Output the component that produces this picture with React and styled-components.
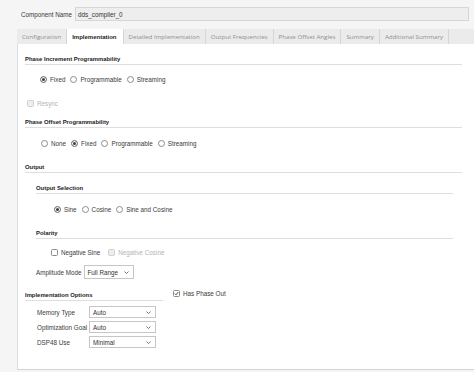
import styled, { createGlobalStyle } from 'styled-components';

const GlobalStyle = createGlobalStyle`
  body {
    margin: 0;
    background: #f5f5f5;
    font-family: "Liberation Sans", Arial, sans-serif;
    color: #3a3a3a;
  }
`;

const Page = styled.div`
  width: 474px;
  height: 372px;
  overflow: hidden;
  background: #f5f5f5;
  display: flex;
  flex-direction: column;
  font-size: 6.3px;
`;

const NameRow = styled.div`
  display: flex;
  align-items: center;
  gap: 3px;
  height: 14px;
  padding: 7px 5px 0 21px;
`;

const NameInput = styled.div`
  flex: 1;
  height: 14px;
  box-sizing: border-box;
  border: 1px solid #d6d6d6;
  background: #eeeeee;
  display: flex;
  align-items: center;
  padding-left: 2px;
  color: #333;
`;

const TabArea = styled.div`
  margin: 8px 0 0 17px;
  display: flex;
  flex-direction: column;
`;

const TabBar = styled.div`
  height: 15px;
  background: #ebebeb;
  display: flex;
`;

const Tab = styled.div`
  display: flex;
  align-items: center;
  padding: 0 ${p => (p.$active ? '6px' : '5px')} 0 5px;
  border-right: 1px solid #d6d6d6;
  background: ${p => (p.$active ? '#ffffff' : 'transparent')};
  font-family: ${p => (p.$active ? '"Liberation Sans", Arial' : '"Open Sans"')}, sans-serif;
  font-weight: ${p => (p.$active ? 'bold' : 'normal')};
  font-size: ${p => (p.$active ? '6px' : '6.15px')};
  color: ${p => (p.$active ? '#1e1e1e' : '#8e8e8e')};
`;

const Panel = styled.div`
  height: 326px;
  box-sizing: border-box;
  background: #ffffff;
  border-left: 1px solid #dddddd;
  border-bottom: 1px solid #d4d4d4;
  padding: 0 12px 0 7px;
  display: flex;
  flex-direction: column;
`;

const Heading = styled.div`
  margin-top: ${p => p.$mt}px;
  font-weight: bold;
  font-size: 5.9px;
  line-height: 8px;
  padding-bottom: 1px;
  border-bottom: 1px solid #dedede;
  color: #222;
`;

const SubSection = styled.div`
  margin: 0 9px 0 11px;
  display: flex;
  flex-direction: column;
`;

const Row = styled.div`
  display: flex;
  align-items: center;
  gap: ${p => p.$gap ?? 5}px;
  height: ${p => p.$h ?? 8}px;
  margin-top: ${p => p.$mt}px;
  padding-left: ${p => p.$indent ?? 0}px;
`;

const Option = styled.label`
  display: flex;
  align-items: center;
  gap: 3px;
  white-space: nowrap;
  color: ${p => (p.$disabled ? '#b4b4b4' : '#3a3a3a')};
`;

const Radio = styled.span`
  width: 7px;
  height: 7px;
  box-sizing: border-box;
  border-radius: 50%;
  border: 1px solid #8c8c8c;
  background: ${p => (p.$checked ? '#3c3c3c' : '#ffffff')};
  box-shadow: ${p => (p.$checked ? 'inset 0 0 0 1px #ffffff' : 'none')};
`;

const Box = styled.span`
  width: 7px;
  height: 7px;
  box-sizing: border-box;
  border-radius: 1.5px;
  border: 1px solid ${p => (p.$disabled ? '#cfcfcf' : '#8a8a8a')};
  background: ${p => (p.$disabled ? '#eeeeee' : '#ffffff')};
  display: flex;
  align-items: center;
  justify-content: center;
`;

const Select = styled.div`
  width: ${p => p.$w}px;
  height: ${p => p.$h}px;
  box-sizing: border-box;
  border: 1px solid #c6c6c6;
  background: #ffffff;
  display: flex;
  align-items: center;
  justify-content: space-between;
  padding: 0 4px 0 3px;
  color: #333;
`;

const ImplRow = styled.div`
  display: flex;
  align-items: flex-start;
  gap: 10px;
  margin-top: 12px;
`;

const ImplLeft = styled.div`
  width: 138px;
  display: flex;
  flex-direction: column;
`;

const FormGrid = styled.div`
  display: grid;
  grid-template-columns: 52px 67px;
  grid-auto-rows: 12px;
  row-gap: 3px;
  align-items: center;
  margin-top: 5px;
  padding-left: 12px;
`;

const Label = styled.span`
  white-space: nowrap;
`;

const Chevron = () => (
  <svg width="5" height="3" viewBox="0 0 5 3">
    <path d="M0.5 0.5 L2.5 2.5 L4.5 0.5" fill="none" stroke="#555" strokeWidth="0.8" />
  </svg>
);

const Check = () => (
  <svg width="5" height="5" viewBox="0 0 5 5">
    <path d="M0.8 2.6 L2 3.8 L4.3 1" fill="none" stroke="#333" strokeWidth="0.9" />
  </svg>
);

const RadioGroup = ({ items, value, mt, indent }) => (
  <Row $mt={mt} $indent={indent}>
    {items.map(it => (
      <Option key={it}>
        <Radio $checked={it === value} />
        {it}
      </Option>
    ))}
  </Row>
);

const DropDown = ({ value, w, h }) => (
  <Select $w={w} $h={h}>
    <span>{value}</span>
    <Chevron />
  </Select>
);

const tabs = [
  'Configuration',
  'Implementation',
  'Detailed Implementation',
  'Output Frequencies',
  'Phase Offset Angles',
  'Summary',
  'Additional Summary',
];

export default function App() {
  return (
    <Page>
      <GlobalStyle />
      <NameRow>
        <span>Component Name</span>
        <NameInput>dds_compiler_0</NameInput>
      </NameRow>
      <TabArea>
        <TabBar>
          {tabs.map(t => (
            <Tab key={t} $active={t === 'Implementation'}>{t}</Tab>
          ))}
        </TabBar>
        <Panel>
          <Heading $mt={11}>Phase Increment Programmability</Heading>
          <RadioGroup mt={10} indent={15} items={['Fixed', 'Programmable', 'Streaming']} value="Fixed" />
          <Row $mt={16} $indent={2}>
            <Option $disabled>
              <Box $disabled />
              Resync
            </Option>
          </Row>

          <Heading $mt={11}>Phase Offset Programmability</Heading>
          <RadioGroup mt={11} indent={16} items={['None', 'Fixed', 'Programmable', 'Streaming']} value="Fixed" />

          <Heading $mt={16}>Output</Heading>
          <SubSection>
            <Heading $mt={11}>Output Selection</Heading>
            <RadioGroup mt={11} indent={18} items={['Sine', 'Cosine', 'Sine and Cosine']} value="Sine" />
            <Heading $mt={16}>Polarity</Heading>
            <Row $mt={9} $indent={15} $gap={8}>
              <Option>
                <Box />
                Negative Sine
              </Option>
              <Option $disabled>
                <Box $disabled />
                Negative Cosine
              </Option>
            </Row>
            <Row $mt={9} $h={14} $gap={2}>
              <Label>Amplitude Mode</Label>
              <DropDown value="Full Range" w={50} h={14} />
            </Row>
          </SubSection>

          <ImplRow>
            <ImplLeft>
              <Heading $mt={0}>Implementation Options</Heading>
              <FormGrid>
                <Label>Memory Type</Label>
                <DropDown value="Auto" w={67} h={12} />
                <Label>Optimization Goal</Label>
                <DropDown value="Auto" w={67} h={12} />
                <Label>DSP48 Use</Label>
                <DropDown value="Minimal" w={67} h={12} />
              </FormGrid>
            </ImplLeft>
            <Row $mt={-2}>
              <Option>
                <Box>
                  <Check />
                </Box>
                Has Phase Out
              </Option>
            </Row>
          </ImplRow>
        </Panel>
      </TabArea>
    </Page>
  );
}
